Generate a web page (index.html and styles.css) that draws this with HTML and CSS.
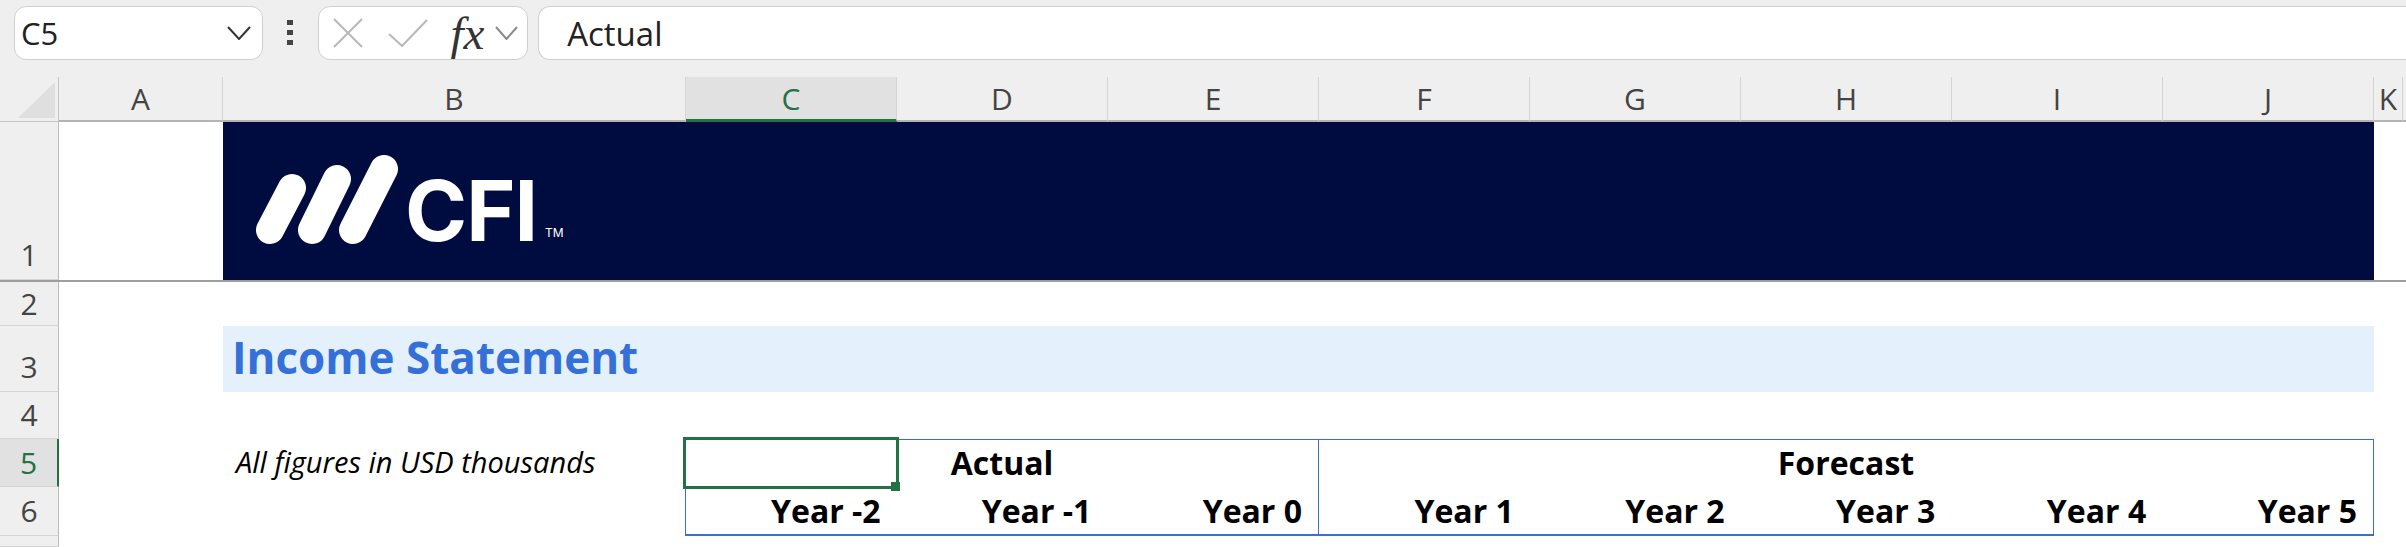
FILE: index.html
```html
<!DOCTYPE html>
<html>
<head>
  <meta charset="utf-8">
  <link rel="stylesheet" href="styles.css">
</head>
<body>
  <div class="formula-bar">
    <div class="name-box">
      <span class="name-value">C5</span>
      <svg class="chevron name-chevron" width="24" height="14" viewBox="0 0 24 14"><path d="M1 1 L12 13 L23 1"/></svg>
    </div>
    <div class="grip"><span></span><span></span><span></span></div>
    <div class="fx-box">
      <svg class="fx-icon" width="30" height="30" viewBox="0 0 30 30"><path d="M1 1 L29 29 M29 1 L1 29"/></svg>
      <svg class="fx-icon check" width="40" height="28" viewBox="0 0 40 28"><path d="M1 15 L14 27 L39 1"/></svg>
      <span class="fx-label">fx</span>
      <svg class="chevron fx-chevron" width="23" height="14" viewBox="0 0 23 14"><path d="M1 1 L11.5 13 L22 1"/></svg>
    </div>
    <div class="formula-input">Actual</div>
  </div>

  <div class="sheet">
    <div class="corner"><svg width="59" height="45" viewBox="0 0 59 45"><path d="M18 41 L55 5 V41 Z"/></svg></div>
    <div class="col-head">A</div>
    <div class="col-head">B</div>
    <div class="col-head selected">C</div>
    <div class="col-head">D</div>
    <div class="col-head">E</div>
    <div class="col-head">F</div>
    <div class="col-head">G</div>
    <div class="col-head">H</div>
    <div class="col-head">I</div>
    <div class="col-head">J</div>
    <div class="col-head">K</div>
    <div class="col-head tail"></div>

    <div class="row-head row-tall">1</div>
    <div class="banner">
      <svg class="logo-mark" width="142" height="90" viewBox="256 155 142 90">
        <path d="M270 230 L292 188"/>
        <path d="M312 230 L337 179"/>
        <path d="M353 230 L384 169"/>
      </svg>
      <span class="logo-text">CFI</span>
      <span class="logo-tm">TM</span>
    </div>
    <div class="freeze-line"></div>

    <div class="row-head">2</div>
    <div class="row-head row-tall">3</div>
    <div class="title-band">Income Statement</div>
    <div class="row-head">4</div>
    <div class="row-head selected">5</div>
    <div class="units-note">All figures in USD thousands</div>
    <div class="period-box">
      <div class="period period-actual">
        <div class="period-title">Actual</div>
        <div class="year">Year -2</div>
        <div class="year">Year -1</div>
        <div class="year">Year 0</div>
      </div>
      <div class="period period-forecast">
        <div class="period-title">Forecast</div>
        <div class="year">Year 1</div>
        <div class="year">Year 2</div>
        <div class="year">Year 3</div>
        <div class="year">Year 4</div>
        <div class="year">Year 5</div>
      </div>
      <div class="cell-selection"><span class="fill-handle"></span></div>
    </div>
    <div class="row-head">6</div>
    <div class="row-head"></div>
  </div>
</body>
</html>
```

FILE: styles.css
```css
* {
  box-sizing: border-box;
  margin: 0;
  padding: 0;
}

body {
  width: 2406px;
  height: 547px;
  overflow: hidden;
  background: white;
  font-family: "Open Sans", sans-serif;
  color: #222;
}

/* Formula bar */
.formula-bar {
  height: 77px;
  padding: 6px 0 0 14px;
  background: #efefef;
  display: flex;
  align-items: flex-start;
}

.name-box, .fx-box, .formula-input {
  height: 54px;
  background: white;
  border: 1px solid #cfcfcf;
  border-radius: 12px;
  display: flex;
  align-items: center;
}

.name-box {
  width: 251px;
  padding: 0 11px 0 6px;
  justify-content: space-between;
  font-size: 31px;
}

.chevron path, .fx-icon path {
  fill: none;
  stroke-width: 2;
}

.chevron path {
  stroke: #333;
}

.fx-chevron path {
  stroke: #8a8a8a;
}

.grip {
  width: 11px;
  margin: 14px 20px 0 24px;
  display: flex;
  flex-direction: column;
  gap: 5px;
}

.grip span {
  width: 6px;
  height: 5px;
  background: #444;
}

.fx-box {
  width: 211px;
  padding-left: 14px;
}

.fx-icon path {
  stroke: #b8b8b8;
}

.check {
  margin-left: 25px;
}

.fx-label {
  margin-left: 22px;
  font-family: "Liberation Serif", serif;
  font-style: italic;
  font-size: 47px;
  line-height: 44px;
  color: #333;
}

.fx-chevron {
  margin-left: 11px;
}

.formula-input {
  width: 1880px;
  margin-left: 10px;
  padding-left: 28px;
  border-right: none;
  border-radius: 12px 0 0 12px;
  font-size: 33px;
}

/* Sheet grid */
.sheet {
  display: grid;
  grid-template-columns: 59px 164px 463px repeat(8, 211px) 29px 3px;
  grid-template-rows: 45px 158px 2px 44px 66px 47px 48px 49px 11px;
}

.corner {
  background: #efefef;
  border-right: 1px solid #c4c4c4;
  border-bottom: 1px solid #c4c4c4;
}

.corner svg {
  display: block;
}

.corner path {
  fill: #dfdfdf;
}

.col-head {
  background: #efefef;
  color: #444;
  font-size: 30px;
  line-height: 44px;
  text-align: center;
  border-right: 1px solid #d4d4d4;
  border-bottom: 2px solid #b4b4b4;
}

.col-head.selected {
  background: #e1e1e1;
  color: #217346;
  border-bottom: 3px solid #217346;
}

.col-head.tail {
  border-right: none;
}

.row-head {
  grid-column: 1;
  background: #efefef;
  color: #444;
  font-size: 30px;
  line-height: 40px;
  border-right: 1px solid #bcbcbc;
  border-bottom: 1px solid #d4d4d4;
  text-align: center;
  display: flex;
  align-items: center;
  justify-content: center;
}

.row-head.row-tall {
  align-items: flex-end;
  padding-bottom: 4px;
}

.row-head.selected {
  background: #e1e1e1;
  color: #217346;
  border-right: 2px solid #217346;
}

.freeze-line {
  grid-column: 1 / -1;
  background: #9e9e9e;
}

/* Logo banner */
.banner {
  grid-column: 3 / 12;
  background: #000c40;
  color: white;
  padding: 33px 0 0 33px;
  display: flex;
  align-items: flex-start;
}

.logo-mark path {
  fill: none;
  stroke: white;
  stroke-width: 28;
  stroke-linecap: round;
}

.logo-text {
  margin: 14px 0 0 7px;
  font-family: Inter, sans-serif;
  font-weight: 700;
  font-size: 84px;
  line-height: 84px;
  letter-spacing: -1px;
}

.logo-tm {
  margin: 71px 0 0 8px;
  font-family: Inter, sans-serif;
  font-size: 12px;
  line-height: 14px;
}

/* Sheet content */
.title-band {
  grid-column: 3 / 12;
  background: #e4f0fc;
  color: #3570d8;
  font-size: 44px;
  font-weight: 700;
  line-height: 62px;
  padding-left: 9px;
}

.units-note {
  grid-column: 3;
  padding-left: 13px;
  font-size: 29px;
  font-style: italic;
  line-height: 46px;
  color: black;
}

.period-box {
  grid-column: 4 / 12;
  grid-row: span 2;
  margin-left: -1px;
  position: relative;
  display: flex;
  border: 1px solid #3a6fcf;
  border-bottom-width: 2px;
  color: black;
  font-weight: 700;
  font-size: 32px;
}

.period {
  display: grid;
  grid-template-rows: 47px 1fr;
}

.period-actual {
  flex: 0 0 633px;
  grid-template-columns: repeat(3, 1fr);
  border-right: 1px solid #3a6fcf;
}

.period-forecast {
  flex: 1;
  grid-template-columns: repeat(5, 1fr);
}

.period-title {
  grid-column: 1 / -1;
  text-align: center;
  line-height: 46px;
}

.year {
  text-align: right;
  padding-right: 16px;
  line-height: 47px;
}

.cell-selection {
  position: absolute;
  top: -3px;
  left: -3px;
  width: 216px;
  height: 52px;
  border: 3px solid #217346;
}

.fill-handle {
  position: absolute;
  right: -4px;
  bottom: -5px;
  width: 9px;
  height: 9px;
  background: #217346;
}
```
